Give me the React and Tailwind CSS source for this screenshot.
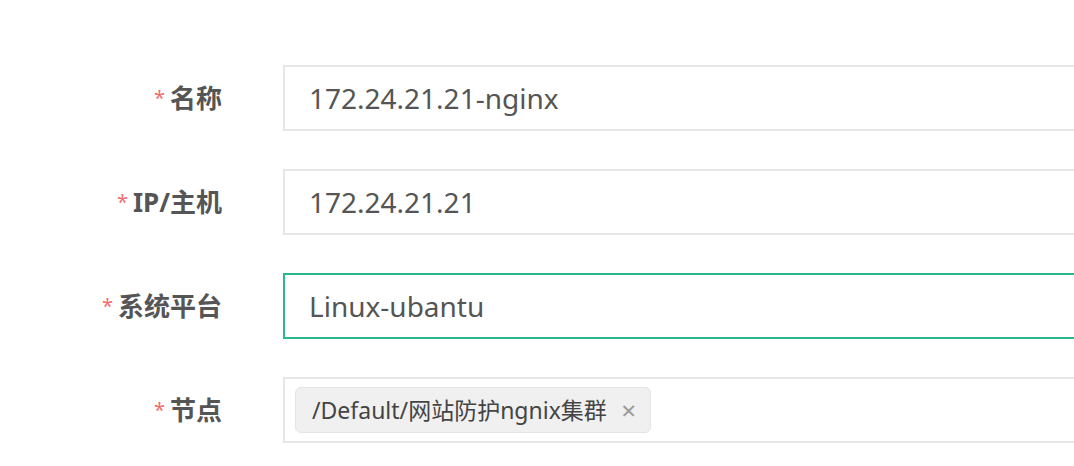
import React from "react";

const fontStack = { fontFamily: '"Noto Sans", "Noto Sans CJK SC", sans-serif' };

const Label = ({ children }) => (
  <div className="w-[222px] shrink-0 flex justify-end items-center text-[26px] font-bold text-[#555]">
    <span className="text-[#f56c6c] text-[20px] mr-[5px] font-normal">*</span>
    {children}
  </div>
);

const Field = ({ label, value, active }) => (
  <div className="flex items-center">
    <Label>{label}</Label>
    <div
      className={
        active
          ? "ml-[61px] w-[820px] shrink-0 h-[66px] border-[2px] border-[#2bb78f] flex items-center pl-[24px] text-[28px] text-[#555]"
          : "ml-[61px] w-[820px] shrink-0 h-[66px] border-[2px] border-[#e6e6e6] flex items-center pl-[24px] text-[28px] text-[#555]"
      }
    >
      {value}
    </div>
  </div>
);

export default function App() {
  return (
    <div className="w-[1074px] h-[466px] bg-white overflow-hidden pt-[65px]" style={fontStack}>
      <div className="flex flex-col gap-[38px]">
        <Field label="名称" value="172.24.21.21-nginx" />
        <Field label="IP/主机" value="172.24.21.21" />
        <Field label="系统平台" value="Linux-ubantu" active />
        <div className="flex items-center">
          <Label>节点</Label>
          <div className="ml-[61px] w-[820px] shrink-0 h-[66px] border-[2px] border-[#e6e6e6] flex items-center pl-[10px]">
            <div className="h-[46px] w-[356px] flex items-center bg-[#f0f0f0] border border-[#e4e4e4] rounded-[6px] pl-[16px] text-[23px] text-[#444]">
              <span>/Default/网站防护ngnix集群</span>
              <span className="ml-auto mr-[14px] text-[#999] text-[26px] leading-none">×</span>
            </div>
          </div>
        </div>
      </div>
    </div>
  );
}
